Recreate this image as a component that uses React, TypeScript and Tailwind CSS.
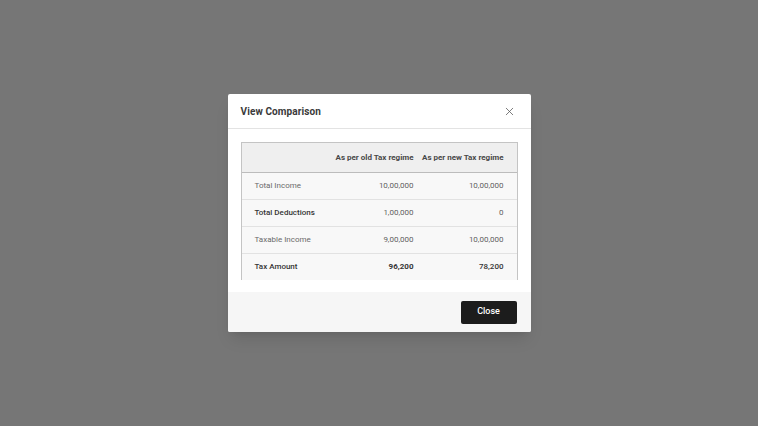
import { X } from "lucide-react";

const rows = [
  { label: "Total Income", oldVal: "10,00,000", newVal: "10,00,000", strong: false, strongVals: false },
  { label: "Total Deductions", oldVal: "1,00,000", newVal: "0", strong: true, strongVals: false },
  { label: "Taxable Income", oldVal: "9,00,000", newVal: "10,00,000", strong: false, strongVals: false },
  { label: "Tax Amount", oldVal: "96,200", newVal: "78,200", strong: true, strongVals: true },
];

export default function App() {
  return (
    <div
      className="w-full h-screen bg-[#767676] flex items-center justify-center"
      style={{ fontFamily: "Roboto, 'Noto Sans', sans-serif" }}
    >
      {/* Modal */}
      <div className="w-[303px] bg-white rounded-[2px] shadow-lg overflow-hidden">
        {/* Header */}
        <div className="h-[35px] flex items-center justify-between pl-[13px] pr-[15px] border-b border-[#e3e3e3]">
          <h2 className="text-[10px] font-bold text-[#3a3a3a] tracking-[0.1px]">View Comparison</h2>
          <button className="text-[#555]">
            <X size={13} strokeWidth={1.4} />
          </button>
        </div>

        {/* Body */}
        <div className="px-[13px] pt-[13px] pb-[12px]">
          <div className="h-[138px] overflow-hidden">
            <div className="border border-[#c4c4c4] border-b-0">
              <div className="grid grid-cols-[87px_91px_96px] h-[30px] items-center bg-[#efefef] border-b border-[#bcbcbc] text-[8px] font-bold text-[#484848]">
                <div />
                <div className="text-right pr-[6px] pt-[1px] whitespace-nowrap">As per old Tax regime</div>
                <div className="text-right pr-[12px] pt-[1px] whitespace-nowrap">As per new Tax regime</div>
              </div>
              {rows.map((r) => (
                <div
                  key={r.label}
                  className="grid grid-cols-[87px_91px_96px] h-[27px] items-center bg-[#f8f8f8] border-b border-[#e2e2e2] text-[8px]"
                >
                  <div className={`pl-[13px] whitespace-nowrap ${r.strong ? "font-medium text-[#353535]" : "text-[#6a6a6a]"}`}>
                    {r.label}
                  </div>
                  <div className={`text-right pr-[6px] ${r.strongVals ? "font-bold text-[#353535]" : "text-[#5f5f5f]"}`}>
                    {r.oldVal}
                  </div>
                  <div className={`text-right pr-[12px] ${r.strongVals ? "font-medium text-[#353535]" : "text-[#5f5f5f]"}`}>
                    {r.newVal}
                  </div>
                </div>
              ))}
            </div>
          </div>
        </div>

        {/* Footer */}
        <div className="h-[40px] bg-[#f6f6f6] flex items-center justify-end pr-[14px]">
          <button className="w-[56px] h-[23px] bg-[#1c1c1c] text-white text-[9px] font-medium rounded-[2px]">
            Close
          </button>
        </div>
      </div>
    </div>
  );
}
